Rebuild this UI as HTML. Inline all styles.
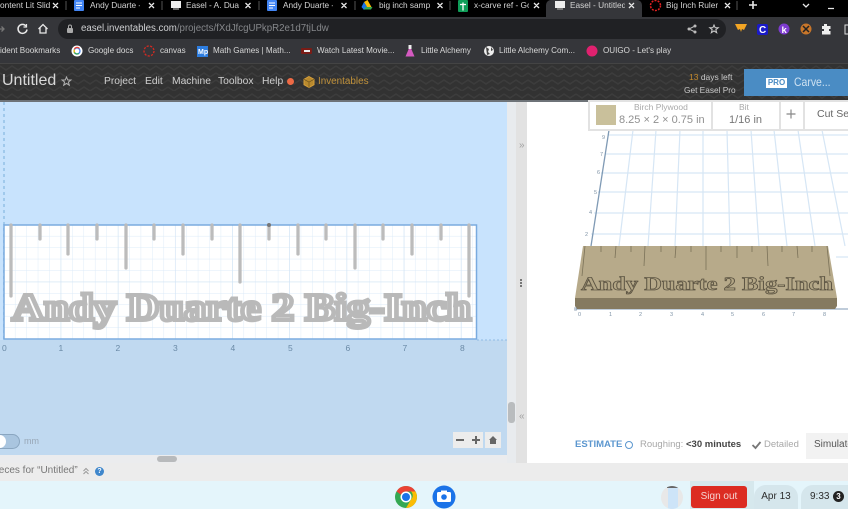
<!DOCTYPE html>
<html><head><meta charset="utf-8"><style>
html,body{margin:0;padding:0;background:#fff}
#r{position:relative;width:848px;height:509px;overflow:hidden;font-family:"Liberation Sans",sans-serif}
.a{position:absolute;white-space:nowrap}
.t{font-size:8.3px;color:#d4d4d4;top:-1px;line-height:12px;overflow:hidden}
.b{font-size:8.1px;color:#d8d8d8;top:45px;line-height:12px}
.n{font-size:10.3px;color:#cfcfcf;top:75px;line-height:13px}
</style></head><body><div id="r">
<div class="a" style="left:0;top:0;width:848px;height:17px;background:#000"></div>
<div class="a" style="left:546px;top:0;width:96px;height:17px;background:#35363a;border-radius:5px 5px 0 0"></div>
<div class="a" style="left:0;top:17px;width:848px;height:22px;background:#35363a"></div>
<div class="a" style="left:58px;top:19px;width:668px;height:20px;background:#202124;border-radius:10px"></div>
<div class="a" style="left:0;top:39px;width:848px;height:24px;background:#35363a"></div>
<svg class="a" style="left:0;top:63px" width="848" height="37" viewBox="0 0 848 37">
<defs><pattern id="hx" width="24" height="14" patternUnits="userSpaceOnUse"><path d="M0 3l6 4 6-4 6 4 6-4M0 10l6 4 6-4 6 4 6-4" stroke="#3c3c3c" stroke-width="1.500" fill="none"/></pattern></defs>
<rect width="848" height="37" fill="#323232"/><rect width="848" height="37" fill="url(#hx)"/><rect width="848" height="1" fill="#444"/>
</svg>
<div class="a" style="left:0;top:100px;width:848px;height:2px;background:#6e7378"></div>

<div class="a t" style="left:0;width:50px">ontent Lit Slid</div>
<div class="a t" style="left:90px;width:50px">Andy Duarte - I</div>
<div class="a t" style="left:186px;width:53px">Easel - A. Duar</div>
<div class="a t" style="left:283px;width:50px">Andy Duarte - I</div>
<div class="a t" style="left:379px;width:52px">big inch samp</div>
<div class="a t" style="left:474px;width:55px">x-carve ref - Go</div>
<div class="a t" style="left:570px;width:55px">Easel - Untitled</div>
<div class="a t" style="left:666px;width:52px">Big Inch Ruler -</div>
<svg class="a" style="left:0;top:0" width="848" height="64" viewBox="0 0 848 64">
<g stroke="#555" stroke-width="1"><path d="M66 1v9M162 1v9M259 1v9M355 1v9M450 1v9M737 1v9"/></g>
<g stroke="#e8e8e8" stroke-width="1.300" fill="none">
<path d="M53 3l5 5m0-5l-5 5M149 3l5 5m0-5l-5 5M245.500 3l5 5m0-5l-5 5M341.500 3l5 5m0-5l-5 5M437.500 3l5 5m0-5l-5 5M534 3l5 5m0-5l-5 5M629 3l5 5m0-5l-5 5M725 3l5 5m0-5l-5 5"/>
<path d="M753 1v8M749 5h8" stroke-width="1.600"/><path d="M803 4l3 3 3-3M828 8.500h6"/>
<path d="M26 26a4.500 4.500 0 1 0 1 3.500" stroke-width="1.500"/><path d="M26.500 24v3h-3" stroke-width="1.200"/>
<path d="M38.500 29l4.500-4.500 4.500 4.500M40 28v5h6v-5" stroke-width="1.300"/>
<path d="M0 29h3M1.500 26.500L4 29l-2.500 2.500" stroke="#777"/>
<path d="M695 26l-6 3 6 3" stroke="#bbb" stroke-width="1"/>
<path d="M714 25l1.200 2.800h3l-2.400 1.900.9 3-2.700-1.800-2.700 1.800.9-3-2.400-1.900h3z" stroke="#ccc" stroke-width="1"/>
</g>
<circle cx="695" cy="26" r="1.500" fill="#bbb"/><circle cx="695" cy="32" r="1.500" fill="#bbb"/><circle cx="689" cy="29" r="1.500" fill="#bbb"/>
<rect x="67" y="28" width="6" height="5" rx="1" fill="#aaa"/><path d="M68.500 28v-1.500a1.500 1.500 0 0 1 3 0V28" stroke="#aaa" fill="none"/>
<rect x="74" y="0" width="10" height="11" rx="1" fill="#4285f4"/><rect x="267" y="0" width="10" height="11" rx="1" fill="#4285f4"/>
<path d="M76 3h6M76 5.500h6M76 8h4M269 3h6M269 5.500h6M269 8h4" stroke="#fff" stroke-width="1"/>
<rect x="171" y="1" width="10" height="7" fill="#eee"/><rect x="173" y="8" width="6" height="2" fill="#666"/><rect x="555" y="1" width="10" height="7" fill="#eee"/><rect x="557" y="8" width="6" height="2" fill="#777"/>
<path d="M367.500 0l4.500 8h-4.500L364 2z" fill="#fbbc04"/><path d="M364 2l3 5-3 3-2.500-3z" fill="#1a73e8"/><path d="M364 9.500h7l1.500-2.500h-7z" fill="#34a853"/>
<rect x="458" y="0" width="10" height="12" rx="1" fill="#0f9d58"/><path d="M460 4.500h6M463 2.500v8" stroke="#fff" stroke-width="1.300"/>
<circle cx="655.500" cy="5.500" r="5" fill="none" stroke="#e02020" stroke-width="1.500" stroke-dasharray="2 1.200"/>
<path d="M735 24h12l-3 6-2-1-1 3-1-3-2 1z" fill="#f3a524"/>
<rect x="757" y="24" width="11" height="11" rx="2" fill="#1a1ac8"/><text x="759" y="33" font-size="10" font-weight="700" fill="#fff" font-family="Liberation Sans">C</text>
<circle cx="784" cy="29" r="5.500" fill="#7e3bd0"/><text x="781.500" y="33" font-size="9.500" font-weight="700" fill="#fff" font-family="Liberation Sans">k</text>
<circle cx="806" cy="29" r="5.500" fill="#c8762a"/><path d="M803 26l6 6m0-6l-6 6" stroke="#222" stroke-width="1.500"/>
<path d="M824 24h3v2h3.500v3H829v2h1.500v3.500H822V31h2v-2h-2v-3h2z" fill="#eee"/>
<rect x="845" y="25" width="5" height="9" fill="none" stroke="#ddd"/>
<circle cx="77" cy="51" r="5.500" fill="#fff"/><circle cx="77" cy="51" r="3" fill="none" stroke="#4285f4" stroke-width="1.300"/><path d="M74.500 49a3 3 0 0 1 5-.5" stroke="#ea4335" stroke-width="1.300" fill="none"/><path d="M74.200 52a3 3 0 0 0 4.500 1.500" stroke="#34a853" stroke-width="1.300" fill="none"/><path d="M74.200 49.500v3" stroke="#fbbc04" stroke-width="1.300"/>
<circle cx="149" cy="51" r="5" fill="none" stroke="#d42a22" stroke-width="1.300" stroke-dasharray="2.200 1.300"/>
<rect x="197" y="46" width="11" height="11" fill="#2d7de0"/><text x="198" y="54" font-size="7" font-weight="700" fill="#fff" font-family="Liberation Sans">Mp</text>
<rect x="301" y="48" width="11" height="6" rx="1" fill="#7a1c16"/><rect x="304" y="50" width="6" height="2" fill="#eee"/>
<path d="M410 46l4.500 10.500h-9z" fill="#d45ac0"/><rect x="408.500" y="45" width="3" height="4" fill="#eee"/>
<circle cx="489" cy="51" r="5" fill="#eee"/><path d="M486 47l3 2-1 3 2 2-3 1zM491 47l2 3-2 1z" fill="#444"/>
<circle cx="592" cy="51" r="5.500" fill="#e0216f"/>
</svg>
<div class="a" style="left:81px;top:22px;font-size:9.700px;color:#cfd0d2;line-height:14px">easel.inventables.com<span style="color:#85878a">/projects/fXdJfcgUPkpR2e1d7tjLdw</span></div>

<div class="a b" style="left:0">ident Bookmarks</div>
<div class="a b" style="left:88px">Google docs</div>
<div class="a b" style="left:160px">canvas</div>
<div class="a b" style="left:213px">Math Games | Math...</div>
<div class="a b" style="left:317px">Watch Latest Movie...</div>
<div class="a b" style="left:421px">Little Alchemy</div>
<div class="a b" style="left:499px">Little Alchemy Com...</div>
<div class="a b" style="left:603px">OUIGO - Let's play</div>

<div class="a" style="left:2px;top:72px;font-size:16px;color:#d8d8d8;line-height:18px">Untitled</div>
<svg class="a" style="left:61px;top:76px" width="11" height="11" viewBox="0 0 11 11"><path d="M5.500 1l1.300 3h3.100l-2.500 2 .9 3.200-2.800-1.800-2.800 1.800.9-3.200-2.500-2h3.100z" fill="none" stroke="#b0b0b0"/></svg>
<div class="a n" style="left:104px">Project</div>
<div class="a n" style="left:145px">Edit</div>
<div class="a n" style="left:172px">Machine</div>
<div class="a n" style="left:218px">Toolbox</div>
<div class="a n" style="left:262px">Help</div>
<div class="a" style="left:287px;top:78px;width:7px;height:7px;border-radius:50%;background:#ee6a45"></div>
<svg class="a" style="left:303px;top:76px" width="12" height="12" viewBox="0 0 12 12"><path d="M6 .5l5 2.800v5.400L6 11.500 1 8.700V3.300z" fill="#b98a2e" stroke="#d59f3a"/><path d="M1 3.300l5 2.800 5-2.800M6 6v5.500" stroke="#6d5420" fill="none" stroke-width=".7"/></svg>
<div class="a n" style="left:318px;color:#c0913a;font-size:9.900px">Inventables</div>
<div class="a" style="left:689px;top:71px;font-size:8.500px;color:#c9c9c9;line-height:12px"><span style="color:#c58a2c">13</span> days left</div>
<div class="a" style="left:684px;top:84px;font-size:8.300px;color:#c9c9c9;line-height:12px">Get Easel Pro</div>
<div class="a" style="left:744px;top:69px;width:104px;height:27px;background:#4a8cc4"></div>
<div class="a" style="left:766px;top:78px;width:21px;height:10px;background:#fff;color:#4a8cc4;font-size:8px;font-weight:700;text-align:center;line-height:10px">PRO</div>
<div class="a" style="left:794px;top:74px;font-size:12px;color:#cfe2f2;line-height:16px;transform:scaleX(.87);transform-origin:left">Carve...</div>

<!-- canvas -->
<div class="a" style="left:0;top:102px;width:507px;height:238px;background:#c8e3fd"></div>
<div class="a" style="left:0;top:340px;width:507px;height:115px;background:#c0d9f0"></div>
<div class="a" style="left:0;top:455px;width:507px;height:8px;background:#ebecee"></div>
<div class="a" style="left:507px;top:102px;width:9px;height:361px;background:#e8ebee"></div>
<div class="a" style="left:516px;top:102px;width:11px;height:361px;background:#e2e2e2"></div>
<div class="a" style="left:527px;top:102px;width:321px;height:361px;background:#fff"></div>
<div class="a" style="left:508px;top:402px;width:7px;height:21px;background:#b9bcbe;border-radius:3px"></div>
<div class="a" style="left:157px;top:456px;width:20px;height:6px;background:#b8babc;border-radius:3px"></div>
<div class="a" style="left:519px;top:140px;font-size:10px;color:#a0a0a0;line-height:12px">»</div>
<div class="a" style="left:519px;top:411px;font-size:10px;color:#a0a0a0;line-height:12px">«</div>
<div class="a" style="left:520px;top:279px;width:2px;height:2px;background:#777;box-shadow:0 3px #777,0 6px #777"></div>

<svg class="a" style="left:0;top:100px" width="507" height="260" viewBox="0 100 507 260" font-family="Liberation Serif">
<defs>
<pattern id="g1" x="4" y="225" width="11.430" height="11.430" patternUnits="userSpaceOnUse"><path d="M11.430 0V11.430M0 11.430H11.430" stroke="#dcebf8" stroke-width=".9" fill="none"/></pattern>
<pattern id="g2" x="4" y="225" width="57.200" height="57.200" patternUnits="userSpaceOnUse"><path d="M57.200 0V57.200M0 57.200H57.200" stroke="#cfe2f4" stroke-width="1" fill="none"/></pattern>
</defs>
<path d="M4 102V340" stroke="#a0c9ec" stroke-dasharray="3 3" stroke-width="2"/>
<path d="M477 340H507" stroke="#8fbbe3" stroke-dasharray="2 2" stroke-width="1"/>
<rect x="4" y="225" width="472.500" height="114" fill="#fff"/>
<rect x="4" y="225" width="472.500" height="114" fill="url(#g1)"/>
<rect x="4" y="225" width="472.500" height="114" fill="url(#g2)"/>
<rect x="4" y="225" width="472.500" height="114" fill="none" stroke="#7aabdf" stroke-width="1.500"/>
<g stroke="#bcbcbc" stroke-width="3.300" stroke-linecap="round">
<path d="M11 225V296M40 225V239M68 225V254M97 225V239M126 225V268M154 225V239M183 225V254M212 225V239M240 225V282M269 225V239M298 225V254M326 225V239M355 225V268M383 225V239M412 225V254M441 225V239M469 225V296"/>
</g>
<circle cx="269" cy="225" r="2" fill="#777"/>
<text x="12" y="320" font-size="38" font-weight="700" textLength="459" lengthAdjust="spacingAndGlyphs" fill="#fff" stroke="#b9b9b9" stroke-width="4">Andy Duarte 2 Big-Inch</text>
<g font-family="Liberation Sans" font-size="8.500" fill="#6a8aa6">
<text x="2" y="351">0</text><text x="58.500" y="351">1</text><text x="115.500" y="351">2</text><text x="173" y="351">3</text><text x="230.500" y="351">4</text><text x="288" y="351">5</text><text x="345.500" y="351">6</text><text x="402.500" y="351">7</text><text x="460" y="351">8</text>
</g>
</svg>

<div class="a" style="left:-8px;top:434px;width:28px;height:15px;background:#a9c5df;border:1px solid #8aa6c0;border-radius:8px;box-sizing:border-box"></div>
<div class="a" style="left:-7px;top:435px;width:13px;height:13px;background:#fff;border-radius:50%"></div>
<div class="a" style="left:24px;top:435px;font-size:9px;color:#98a7b6;line-height:12px">mm</div>
<div class="a" style="left:453px;top:432px;width:30px;height:16px;background:#ececec"></div>
<div class="a" style="left:485px;top:432px;width:16px;height:16px;background:#ececec"></div>
<svg class="a" style="left:453px;top:432px" width="48" height="16" viewBox="0 0 48 16"><path d="M3 8h8M19 8h8M23 4v8" stroke="#666" stroke-width="2"/><path d="M36 8l4-4 4 4h-1v4h-6V8z" fill="#666"/></svg>

<!-- right panel -->
<svg class="a" style="left:527px;top:102px" width="321" height="230" viewBox="527 102 321 230" font-family="Liberation Sans">
<g stroke="#d6e6f5" stroke-width="1.200" fill="none">
<path d="M608 135H848M605 154H848M601 173H848M598 192H848M594 213H848M591 234H848"/>
<path d="M633 130L619 246M656 130L648 246M680 130L675 246M703 130V246M727 130L730 246M751 130L759 246M774 130L787 246M798 130L815 246M822 130L845 246"/>
<path d="M836 257H848"/>
</g>
<path d="M609 130L591 246" stroke="#7f9ab5" stroke-width="1.300" fill="none"/>
<path d="M575 309H848" stroke="#7f9ab5" stroke-width="1" fill="none"/>
<path d="M583 246H828L837 298H575z" fill="#b7aa8a"/>
<path d="M575 298H837V306L835 309H577L575 306z" fill="#857a60"/>
<g stroke="#7b7259" stroke-width=".8" fill="none">
<path d="M585 246L582 276M601 246V252M616 246L615 258M631 246V252M645 246L644 266M661 246V252M676 246L675 258M691 246V252M706 246V270M721 246V252M737 246V258M752 246V252M767 246L768 266M782 246V252M797 246L798 258M812 246V252M827 246L830 276"/>
</g>
<text x="581" y="290" font-size="19" font-weight="700" font-family="Liberation Serif" textLength="252" lengthAdjust="spacingAndGlyphs" fill="#b3a685" stroke="#5e5644" stroke-width=".8">Andy Duarte 2 Big-Inch</text>
<g font-size="5.500" fill="#7f93a6">
<text x="578" y="316">0</text><text x="609" y="316">1</text><text x="639" y="316">2</text><text x="670" y="316">3</text><text x="701" y="316">4</text><text x="731" y="316">5</text><text x="762" y="316">6</text><text x="792" y="316">7</text><text x="823" y="316">8</text>
<text x="574" y="311">0</text><text x="585" y="236">2</text><text x="589" y="214">4</text><text x="594" y="194">5</text><text x="597" y="174">6</text><text x="600" y="156">7</text><text x="602" y="139">9</text>
</g>
</svg>
<div class="a" style="left:588px;top:100px;width:262px;height:31px;background:#fff;border:2px solid #e2e2e2;box-sizing:border-box"></div>
<div class="a" style="left:596px;top:105px;width:20px;height:20px;background:#c9c09b"></div>
<div class="a" style="left:634px;top:102px;font-size:8.500px;color:#a9a9a9;line-height:11px">Birch Plywood</div>
<div class="a" style="left:619px;top:113px;font-size:11px;color:#909090;line-height:14px">8.25 × 2 × 0.75 in</div>
<div class="a" style="left:711px;top:102px;width:2px;height:28px;background:#e2e2e2"></div>
<div class="a" style="left:739px;top:102px;font-size:8.500px;color:#a9a9a9;line-height:11px">Bit</div>
<div class="a" style="left:729px;top:113px;font-size:11px;color:#777;line-height:14px">1/16 in</div>
<div class="a" style="left:779px;top:102px;width:2px;height:28px;background:#e2e2e2"></div>
<div class="a" style="left:803px;top:102px;width:2px;height:28px;background:#e2e2e2"></div>
<svg class="a" style="left:785px;top:108px" width="12" height="12" viewBox="0 0 12 12"><path d="M1.500 6h9M6 1.500v9" stroke="#888" stroke-width="1.200"/></svg>
<div class="a" style="left:817px;top:107px;font-size:10.500px;color:#666;line-height:14px">Cut Settings</div>

<div class="a" style="left:575px;top:438px;font-size:9.500px;font-weight:700;color:#5c97cf;line-height:14px">ESTIMATE</div>
<div class="a" style="left:625px;top:441px;width:8px;height:8px;border:1px solid #5c97cf;border-radius:50%;box-sizing:border-box"></div>
<div class="a" style="left:640px;top:438px;font-size:9.500px;color:#a8a8a8;line-height:14px">Roughing:</div>
<div class="a" style="left:686px;top:438px;font-size:9.500px;font-weight:700;color:#444;line-height:14px">&lt;30 minutes</div>
<svg class="a" style="left:751px;top:440px" width="11" height="10" viewBox="0 0 11 10"><path d="M1.500 5l3 3 5-6" fill="none" stroke="#777" stroke-width="1.800"/></svg>
<div class="a" style="left:764px;top:438px;font-size:9.500px;color:#a8a8a8;line-height:14px">Detailed</div>
<div class="a" style="left:806px;top:433px;width:42px;height:26px;background:#f2f2f2"></div>
<div class="a" style="left:814px;top:438px;font-size:10px;color:#555;line-height:14px">Simulate</div>

<!-- bottom bar -->
<div class="a" style="left:0;top:463px;width:848px;height:18px;background:#ececec"></div>
<div class="a" style="left:-9px;top:464px;font-size:10px;color:#777;line-height:14px">pieces for “Untitled”</div>
<svg class="a" style="left:82px;top:467px" width="8" height="8" viewBox="0 0 8 8"><path d="M1.500 4l2.500-2.500L6.500 4M1.500 7l2.500-2.500L6.500 7" fill="none" stroke="#999"/></svg>
<div class="a" style="left:95px;top:467px;width:9px;height:9px;border-radius:50%;background:#3f87cc;color:#fff;font-size:7px;font-weight:700;text-align:center;line-height:9px">?</div>

<!-- shelf -->
<div class="a" style="left:0;top:481px;width:848px;height:28px;background:#e4f5fb"></div>
<svg class="a" style="left:390px;top:483px" width="70" height="26" viewBox="0 0 70 26">
<circle cx="16" cy="14" r="11" fill="#34a853"/>
<path d="M16 3a11 11 0 0 1 9.500 5.500H16a5.500 5.500 0 0 0-5 3.200L6.500 8.500A11 11 0 0 1 16 3z" fill="#ea4335"/>
<path d="M25.500 8.500A11 11 0 0 1 16 25l5-8.500a5.500 5.500 0 0 0 0-8z" fill="#fbbc04"/>
<circle cx="16" cy="14" r="5.500" fill="#fff"/><circle cx="16" cy="14" r="4" fill="#1a73e8"/>
<circle cx="54" cy="14" r="11.500" fill="#1a73e8"/><rect x="47" y="9" width="14" height="10" rx="1.500" fill="#fff"/><rect x="51" y="7.500" width="6" height="2" fill="#fff"/><circle cx="54" cy="14" r="2.800" fill="#1a73e8"/>
</svg>
<div class="a" style="left:661px;top:486px;width:22px;height:23px;border-radius:50%;background:#e8e8e8;overflow:hidden"><div style="position:absolute;left:7px;top:2px;width:10px;height:21px;background:#cde4f8"></div><div style="position:absolute;left:6px;top:0;width:12px;height:2px;background:#666"></div></div>
<div class="a" style="left:690px;top:481px;width:64px;height:28px;background:#d6e8ed"></div>
<div class="a" style="left:691px;top:486px;width:56px;height:22px;background:#dc2c22;border-radius:3px;color:#f5d5d2;font-size:10px;text-align:center;line-height:22px">Sign out</div>
<div class="a" style="left:754px;top:485px;width:44px;height:24px;background:#d5e6ec;border-radius:12px 12px 0 0;color:#2c2c2c;font-size:10px;text-align:center;line-height:24px">Apr 13</div>
<div class="a" style="left:801px;top:485px;width:47px;height:24px;background:#d5e6ec;border-radius:12px 0 0 0"></div>
<div class="a" style="left:810px;top:491px;font-size:10px;color:#2c2c2c;line-height:12px">9:33</div>
<div class="a" style="left:833px;top:491px;width:11px;height:11px;border-radius:50%;background:#222;color:#fff;font-size:8px;font-weight:700;text-align:center;line-height:11px">3</div>
</div></body></html>
